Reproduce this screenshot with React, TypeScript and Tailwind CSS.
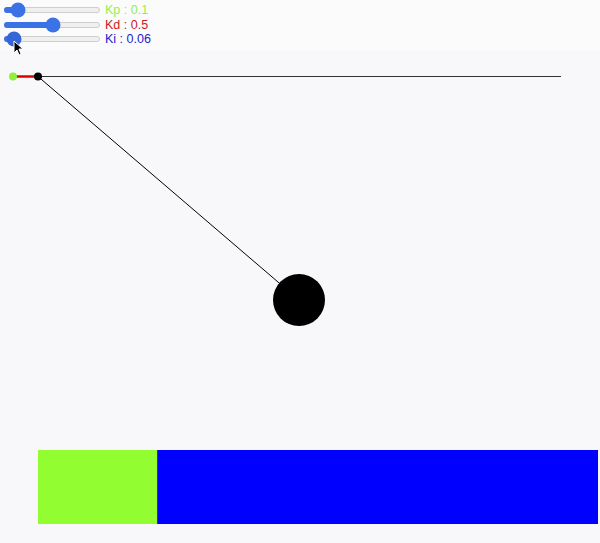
import React from "react";

type SliderProps = { pos: number; label: string; color: string; dotted?: boolean };

function Slider({ pos, label, color, dotted }: SliderProps) {
  return (
    <div className="flex h-[14.5px] items-center">
      <div className="relative ml-[4px] h-[6px] w-[96px] rounded-full border border-[#cfcfcf] bg-[#efefef]">
        <div
          className="absolute inset-y-[-1px] left-[-1px] rounded-full bg-[#3b73e6]"
          style={{ width: pos }}
        />
        <div
          className={
            "absolute top-1/2 h-[15px] w-[15px] -translate-x-1/2 -translate-y-1/2 rounded-full " +
            (dotted ? "bg-[#3466d6]" : "bg-[#3b73e6]")
          }
          style={{ left: pos }}
        />
      </div>
      <span
        className="ml-[5px] text-[12.5px] leading-none"
        style={{ color, fontFamily: '"Liberation Sans", Arial, sans-serif' }}
      >
        {label}
      </span>
    </div>
  );
}

export default function App() {
  return (
    <div className="relative h-[543px] w-[600px] overflow-hidden bg-[#fbfbfc]">
      <div className="flex h-[50px] flex-col pt-[3px]">
        <Slider pos={13} label="Kp : 0.1" color="#93ee4e" />
        <Slider pos={48} label="Kd : 0.5" color="#cc1a1a" />
        <Slider pos={9} label="Ki : 0.06" color="#1c1ccc" dotted />
      </div>

      {/* mouse cursor */}
      <svg className="absolute left-[13px] top-[40px]" width="10" height="16" viewBox="0 0 10 16">
        <path d="M1 1 L1 13 L4 10 L6 15 L8 14 L6 9 L10 9 Z" fill="#000" stroke="#fff" strokeWidth="1" />
      </svg>

      <svg width="600" height="493" className="block bg-[#f8f7f9]">
        <line x1="38" y1="26.5" x2="561" y2="26.5" stroke="#333" strokeWidth="1" />
        <line x1="13" y1="26.5" x2="38" y2="26.5" stroke="#e00000" strokeWidth="2.5" />
        <line x1="38" y1="26.5" x2="299" y2="250" stroke="#000" strokeWidth="1" />
        <circle cx="13" cy="26.5" r="4" fill="#8ef03c" />
        <circle cx="38" cy="26.5" r="4" fill="#000" />
        <circle cx="299" cy="250" r="26" fill="#000" />
        <rect x="38" y="400" width="119.5" height="74" fill="#92fe32" />
        <rect x="157" y="400" width="441" height="74" fill="#0000ff" />
        <line x1="157.5" y1="400" x2="157.5" y2="474" stroke="#1a5a1a" strokeWidth="1" />
      </svg>
    </div>
  );
}
